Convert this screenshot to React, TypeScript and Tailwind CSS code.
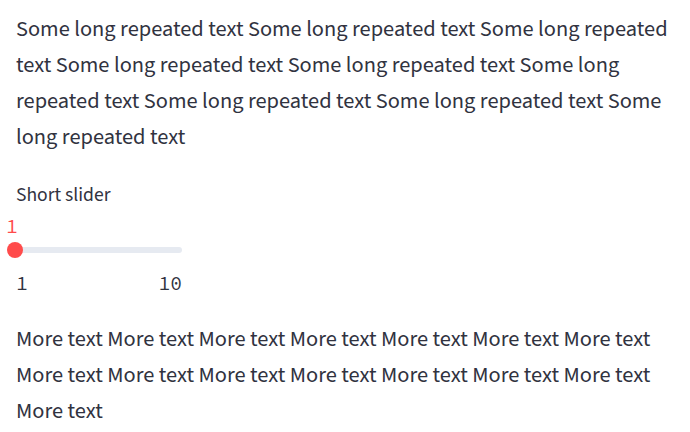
import React from "react";

const body = { fontFamily: "'Source Sans 3', 'Source Sans Pro', Lato, sans-serif" };
const mono = { fontFamily: "'Source Code Pro', 'DejaVu Sans Mono', 'Liberation Mono', monospace" };

export default function App() {
  const p1 = Array(9).fill("Some long repeated text").join(" ");
  const p2 = Array(15).fill("More text").join(" ");
  return (
    <div className="w-[690px] h-[432px] bg-white text-[#31333f] overflow-hidden" style={body}>
      <div className="flex flex-col px-4 pt-[12px]">
        <p className="text-[22.4px] leading-[35.84px]">{p1}</p>
        <div className="mt-[26px] text-[19.6px] leading-[28px]">Short slider</div>
        <div className="ml-[-1px] mt-[7px] flex w-[167px] flex-col">
          <div className="h-[20px] text-[19.6px] leading-[20px] text-[#ff4b4b]" style={mono}>
            <span className="ml-[-9px]">1</span>
          </div>
          <div className="relative mt-[6px] flex h-[16px] items-center">
            <div className="h-[6px] w-full rounded-full bg-[#e6eaf1]" />
            <div className="absolute left-[-8px] top-0 h-[16px] w-[16px] rounded-full bg-[#ff4b4b]" />
          </div>
          <div className="mt-[15px] flex h-[20px] justify-between text-[19.6px] leading-[20px]" style={mono}>
            <span className="ml-[1px]">1</span>
            <span>10</span>
          </div>
        </div>
        <p className="mt-[29px] text-[22.4px] leading-[35.84px]">{p2}</p>
      </div>
    </div>
  );
}
